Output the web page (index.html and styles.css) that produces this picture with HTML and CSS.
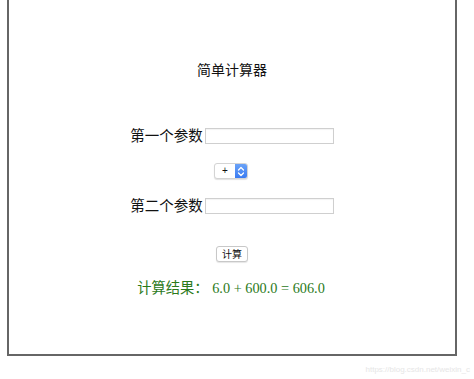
FILE: index.html
```html
<!DOCTYPE html>
<html lang="zh">
<head>
<meta charset="utf-8">
<title>简单计算器</title>
<link rel="stylesheet" href="styles.css">
</head>
<body>
<div class="frame">
  <h1 class="title">简单计算器</h1>
  <div class="row row-first">
    <label class="label">第一个参数</label><span class="input"></span>
  </div>
  <div class="select">
    <span class="select-value">+</span>
    <span class="select-arrows">
      <svg width="8" height="11" viewBox="0 0 8 11"><path d="M1.5 4 L4 1.5 L6.5 4 M1.5 7 L4 9.5 L6.5 7" fill="none" stroke="#fff" stroke-width="1.3" stroke-linecap="round" stroke-linejoin="round"/></svg>
    </span>
  </div>
  <div class="row row-second">
    <label class="label">第二个参数</label><span class="input"></span>
  </div>
  <span class="button">计算</span>
  <p class="result">计算结果： <span class="expr">6.0 + 600.0 = 606.0</span></p>
</div>
<div class="watermark">https://blog.csdn.net/weixin_c</div>
</body>
</html>
```

FILE: styles.css
```css
html, body {
  margin: 0;
  padding: 0;
  background: #fff;
}
body {
  width: 474px;
  height: 379px;
  position: relative;
  overflow: hidden;
  font-family: "Liberation Serif", "Noto Sans CJK SC", serif;
  color: #111;
}
.frame {
  box-sizing: border-box;
  margin-left: 7px;
  width: 450px;
  height: 356px;
  border: 2px solid #666;
  border-top: none;
  display: flex;
  flex-direction: column;
  align-items: center;
}
.title {
  margin: 61px 0 0 0;
  font-size: 14px;
  line-height: 20px;
  font-weight: normal;
  color: #111;
}
.row {
  display: flex;
  align-items: center;
  height: 18px;
}
.row-first { margin-top: 46px; }
.row-second { margin-top: 18px; }
.label {
  font-size: 14.5px;
  line-height: 18px;
  margin-right: 2px;
  color: #111;
}
.input {
  box-sizing: border-box;
  width: 129px;
  height: 16px;
  border: 1px solid #cfcfcf;
  background: #fff;
  box-shadow: inset 0 1px 1px rgba(0,0,0,0.05);
}
.select {
  margin-top: 18px;
  box-sizing: border-box;
  width: 34px;
  height: 16px;
  display: flex;
  border-radius: 3px;
  border: 1px solid #d4d4d4;
  box-shadow: 0 1px 1px rgba(0,0,0,0.12);
  overflow: hidden;
  background: #fff;
  margin-left: -2px;
}
.select-value {
  flex: 1;
  font-family: "Liberation Sans", "Noto Sans CJK SC", sans-serif;
  font-size: 10px;
  line-height: 14px;
  text-align: center;
  color: #111;
}
.select-arrows {
  width: 12px;
  background: linear-gradient(#6aa2f7, #3b7cf2);
  display: flex;
  align-items: center;
  justify-content: center;
}
.button {
  margin-top: 31px;
  box-sizing: border-box;
  width: 32px;
  height: 16px;
  border: 1px solid #c8c8c8;
  border-radius: 3px;
  background: #fff;
  box-shadow: 0 1px 1px rgba(0,0,0,0.1);
  font-family: "Noto Sans CJK SC", sans-serif;
  font-size: 10px;
  line-height: 14px;
  text-align: center;
  color: #111;
}
.result {
  margin: 16px 0 0 0;
  font-size: 14.3px;
  line-height: 20px;
  color: #2b7a1a;
  padding-right: 2px;
}
.watermark {
  position: absolute;
  right: 4px;
  top: 365px;
  font-family: "Liberation Sans", sans-serif;
  font-size: 8px;
  color: #e6e6e6;
}
```
